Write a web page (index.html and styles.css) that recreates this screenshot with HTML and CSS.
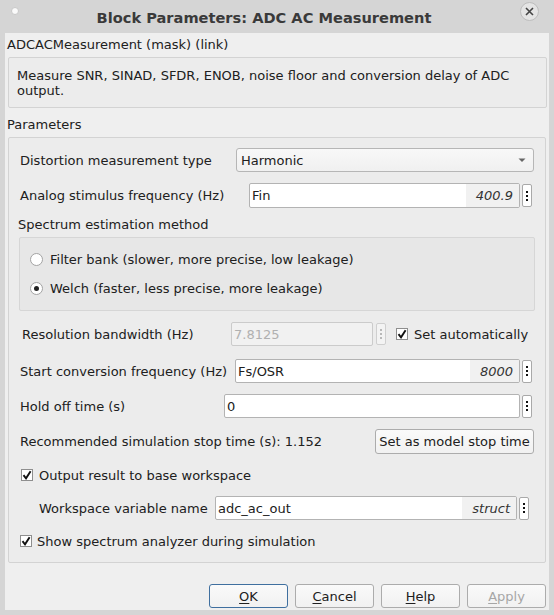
FILE: index.html
```
<!DOCTYPE html>
<html>
<head>
<meta charset="utf-8">
<link rel="stylesheet" href="styles.css">
</head>
<body>
<div class="window">
  <div class="titlebar">
    <span class="dot"></span>
    <div class="title">Block Parameters: ADC AC Measurement</div>
    <span class="close"><svg width="9" height="9" viewBox="0 0 9 9"><path d="M1 1L8 8M8 1L1 8" stroke="#444" stroke-width="1.6"/></svg></span>
  </div>
  <div class="content">
    <div class="mask-title">ADCACMeasurement (mask) (link)</div>
    <div class="desc">Measure SNR, SINAD, SFDR, ENOB, noise floor and conversion delay of ADC output.</div>
    <div class="section-label">Parameters</div>
    <div class="params">
      <div class="row row-dist">
        <span class="lbl lbl-dist">Distortion measurement type</span>
        <div class="combo"><span>Harmonic</span><svg width="8" height="5" viewBox="0 0 8 5"><path d="M0.5 0.5H7.5L4 4Z" fill="#666"/></svg></div>
      </div>
      <div class="row row-fin">
        <span class="lbl lbl-fin">Analog stimulus frequency (Hz)</span>
        <div class="edit"><span class="txt">Fin</span><span class="val">400.9</span></div>
        <span class="kebab"><i></i><i></i><i></i></span>
      </div>
      <div class="group-label">Spectrum estimation method</div>
      <div class="radio-box">
        <div class="radio-row first"><span class="radio"></span>Filter bank (slower, more precise, low leakage)</div>
        <div class="radio-row second"><span class="radio on"></span>Welch (faster, less precise, more leakage)</div>
      </div>
      <div class="row row-res">
        <span class="lbl lbl-res">Resolution bandwidth (Hz)</span>
        <div class="edit disabled res-edit"><span class="txt">7.8125</span></div>
        <span class="kebab disabled"><i></i><i></i><i></i></span>
        <span class="check res-check"><svg width="10" height="10" viewBox="0 0 10 10"><path d="M1.5 5.2L4 8.3L8.6 1.2" fill="none" stroke="#111" stroke-width="1.9"/></svg></span>
        <span class="check-lbl">Set automatically</span>
      </div>
      <div class="row row-start">
        <span class="lbl lbl-start">Start conversion frequency (Hz)</span>
        <div class="edit"><span class="txt">Fs/OSR</span><span class="val">8000</span></div>
        <span class="kebab"><i></i><i></i><i></i></span>
      </div>
      <div class="row row-hold">
        <span class="lbl lbl-hold">Hold off time (s)</span>
        <div class="edit"><span class="txt">0</span></div>
        <span class="kebab"><i></i><i></i><i></i></span>
      </div>
      <div class="row row-rec">
        <span class="lbl lbl-rec">Recommended simulation stop time (s): 1.152</span>
        <button class="btn stop-btn">Set as model stop time</button>
      </div>
      <div class="check-row out-row">
        <span class="check"><svg width="10" height="10" viewBox="0 0 10 10"><path d="M1.5 5.2L4 8.3L8.6 1.2" fill="none" stroke="#111" stroke-width="1.9"/></svg></span>
        <span class="check-lbl">Output result to base workspace</span>
      </div>
      <div class="row row-ws">
        <span class="lbl lbl-ws">Workspace variable name</span>
        <div class="edit"><span class="txt">adc_ac_out</span><span class="val">struct</span></div>
        <span class="kebab"><i></i><i></i><i></i></span>
      </div>
      <div class="check-row show-row">
        <span class="check"><svg width="10" height="10" viewBox="0 0 10 10"><path d="M1.5 5.2L4 8.3L8.6 1.2" fill="none" stroke="#111" stroke-width="1.9"/></svg></span>
        <span class="check-lbl">Show spectrum analyzer during simulation</span>
      </div>
    </div>
    <div class="buttons">
      <button class="btn dlg default"><u>O</u>K</button>
      <button class="btn dlg"><u>C</u>ancel</button>
      <button class="btn dlg"><u>H</u>elp</button>
      <button class="btn dlg disabled"><u>A</u>pply</button>
    </div>
  </div>
</div>
</body>
</html>
```
FILE: styles.css
```
* { box-sizing: border-box; }
html, body { margin: 0; padding: 0; }
body {
  background: #d5d5d5;
  font-family: "DejaVu Sans", sans-serif;
  font-size: 13px;
  color: #202020;
  width: 554px;
  height: 615px;
  overflow: hidden;
}
.window { width: 554px; height: 615px; display: flex; flex-direction: column; }
.titlebar { height: 33px; flex: none; display: flex; align-items: center; }
.dot {
  width: 8px; height: 8px; margin: -11px 0 0 11px; border-radius: 50%;
  background: #fafafa; border: 1px solid #c8c8c8; flex: none;
}
.title {
  flex: 1; text-align: center; font-weight: bold; font-size: 14.6px; color: #3a3a3a;
  padding-right: 11px; margin-top: 1px;
}
.close {
  width: 19px; height: 19px; margin: -11px 15px 0 0; border-radius: 50%; flex: none;
  background: #e4e4e4; border: 1px solid #bdbdbd;
  display: flex; align-items: center; justify-content: center;
}
.content {
  flex: 1; margin: 0 5px 5px; background: #efefef;
  display: flex; flex-direction: column;
}
.mask-title { padding: 4px 0 0 2px; line-height: 16px; }
.desc {
  margin: 4px 2px 0 3px; background: #ececec; border: 1px solid #d3d3d3; border-radius: 2px;
  padding: 9.5px 8px; line-height: 15px;
}
.section-label { margin-top: 9px; padding-left: 2px; line-height: 16px; }
.params {
  margin: 4px 3px 0 3px; height: 426px; background: #ececec;
  border: 1px solid #d3d3d3; border-radius: 2px;
  display: flex; flex-direction: column;
}
.row { display: flex; align-items: center; padding: 0 13px 0 11px; flex: none; }
.lbl { flex: none; white-space: nowrap; }
.row-dist { margin-top: 10px; height: 24px; padding-right: 11px; }
.lbl-dist { width: 216px; }
.combo {
  flex: 1; height: 24px; border: 1px solid #b6b6b6; border-radius: 3px;
  background: linear-gradient(#f8f8f8, #f0f0f0);
  display: flex; align-items: center; justify-content: space-between; padding: 0 7px 0 4px;
}
.edit {
  flex: 1; height: 100%; background: #fff; border: 1px solid #b3b3b3; border-radius: 2px;
  display: flex; align-items: stretch; overflow: hidden;
}
.edit .txt { flex: 1; display: flex; align-items: center; padding-left: 2px; }
.edit .val {
  flex: none; display: flex; align-items: center; background: #f1f1f1;
  font-style: italic; color: #333; padding: 0 6px 0 10px;
}
.kebab {
  flex: none; width: 10px; height: 23px; margin-left: 2px; background: #fff;
  border: 1px solid #a9a9a9; border-radius: 2px;
  display: flex; flex-direction: column; align-items: center; justify-content: center; gap: 2px;
}
.kebab i { display: block; width: 2px; height: 2px; background: #111; }
.kebab.disabled { background: #f3f3f3; border-color: #cfcfcf; }
.kebab.disabled i { background: #b8b8b8; }
.row-fin { margin-top: 11px; height: 25px; }
.lbl-fin { width: 229px; }
.group-label { margin-top: 9px; padding-left: 9px; line-height: 16px; }
.radio-box {
  margin: 4px 10px 0 10px; height: 74px; background: #e7e7e7; border: 1px solid #d6d6d6;
  border-radius: 2px; padding: 0 0 0 10px;
}
.radio-row { display: flex; align-items: center; height: 22px; }
.radio-row.first { margin-top: 10px; }
.radio-row.second { margin-top: 7px; }
.radio {
  width: 13px; height: 13px; border-radius: 50%; background: #fff; border: 1px solid #a3a3a3;
  margin-right: 7px; flex: none; display: flex; align-items: center; justify-content: center;
}
.radio.on::after { content: ""; width: 5px; height: 5px; border-radius: 50%; background: #222; }
.row-res { margin-top: 11px; height: 24px; padding-left: 13px; }
.lbl-res { width: 209px; }
.res-edit { flex: none; width: 142px; }
.edit.disabled { background: #f1f1f1; border-color: #cbcbcb; color: #b0b0b0; }
.row-res .kebab { height: 22px; margin-left: 3px; }
.check {
  flex: none; width: 12px; height: 12px; background: #fff; border: 1px solid #8e8e8e;
  display: flex; align-items: center; justify-content: center;
}
.res-check { margin-left: 10px; }
.check-lbl { margin-left: 6px; white-space: nowrap; }
.row-start { margin-top: 13px; height: 24px; }
.lbl-start { width: 215px; }
.row-hold { margin-top: 11px; height: 24px; }
.lbl-hold { width: 204px; }
.row-rec { margin-top: 11px; height: 25px; justify-content: space-between; padding-right: 11px; }
.btn {
  font-family: "DejaVu Sans", sans-serif; font-size: 13px; color: #202020;
  background: linear-gradient(#fafafa, #f1f1f1); border: 1px solid #acacac; border-radius: 3px;
  padding: 0; height: 25px;
}
.stop-btn { width: 159px; }
.check-row { display: flex; align-items: center; height: 20px; flex: none; padding-left: 12px; }
.out-row { margin-top: 11px; }
.row-ws { margin-top: 11px; height: 24px; padding-left: 30px; padding-right: 16px; }
.lbl-ws { width: 176px; }
.show-row { margin-top: 11px; padding-left: 11px; }
.show-row .check-lbl { margin-left: 5px; }
.buttons {
  display: flex; justify-content: flex-end; gap: 7px; margin: 21px 3px 0 0;
}
.dlg { width: 79px; height: 24px; }
.dlg u { text-decoration: underline; text-underline-offset: 2px; }
.dlg.default { border-color: #3f6f9f; }
.dlg.disabled { color: #a6a6a6; }
```
